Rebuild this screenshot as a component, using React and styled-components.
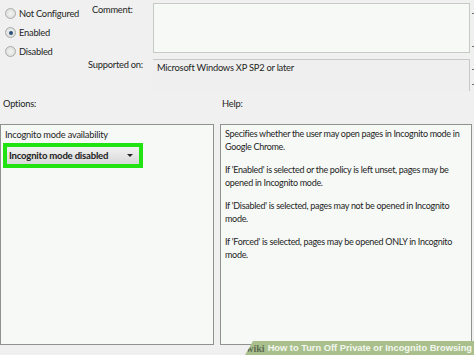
import styled, { createGlobalStyle } from 'styled-components'

const Global = createGlobalStyle`
  html, body {
    margin: 0;
    padding: 0;
    background: #eff0ef;
  }
  body {
    font-family: Lato, "Open Sans", sans-serif;
    font-size: 9.3px;
    letter-spacing: -0.22px;
    color: #1e1e1e;
  }
`;

const Page = styled.div`
  position: relative;
  width: 474px;
  height: 355px;
  overflow: hidden;
  display: flex;
  flex-direction: column;
`;

const Top = styled.div`
  display: flex;
  flex-direction: row;
  padding-top: 3px;
`;

const RadioGroup = styled.div`
  width: 88px;
  display: flex;
  flex-direction: column;
  gap: 6px;
  padding: 4px 0 0 5px;
  box-sizing: border-box;
`;

const RadioRow = styled.label`
  display: flex;
  align-items: center;
  gap: 3px;
  height: 13px;
  white-space: nowrap;
`;

const RadioCircle = styled.span`
  width: 9px;
  height: 9px;
  border-radius: 50%;
  border: 1px solid #a9aca9;
  background: radial-gradient(circle, #f4f4f4 0%, #d5d8d5 100%);
  display: flex;
  align-items: center;
  justify-content: center;
  &::after {
    content: "";
    width: 4px;
    height: 4px;
    border-radius: 50%;
    background: ${p => (p.$checked ? '#2a4f78' : 'transparent')};
  }
`;

const Fields = styled.div`
  flex: 1;
  display: grid;
  grid-template-columns: 65px 1fr 5px;
  grid-template-rows: 50px 32px;
  row-gap: 6px;
`;

const FieldLabel = styled.div`
  padding: ${p => p.$top || 0}px 0 0 4px;
  white-space: nowrap;
`;

const Box = styled.div`
  background: ${p => (p.$gray ? '#eeefee' : '#f6f9f6')};
  border: 1px solid #c6cac6;
  border-right: none;
  ${p => p.$gray && 'border-bottom: none; border-left: none;'}
  padding: 2px 4px;
  box-sizing: border-box;
`;

const ScrollStub = styled.div`
  border-left: 1px solid #c6cac6;
  display: flex;
  flex-direction: column;
  justify-content: space-between;
  padding: 10px 0 6px 2px;
  &::before, &::after {
    content: "";
    width: 3px;
    height: 1px;
    background: #6f6f6f;
  }
`;

const Headers = styled.div`
  display: flex;
  flex-direction: row;
  padding: 7px 0 0 3px;
  height: 33px;
  box-sizing: border-box;
`;

const HeaderLabel = styled.div`
  width: ${p => p.$w}px;
`;

const Panels = styled.div`
  display: flex;
  flex-direction: row;
  gap: 6px;
`;

const Panel = styled.div`
  width: ${p => p.$w}px;
  height: 221px;
  box-sizing: border-box;
  background: #f6f9f6;
  border: 1px solid #8f928f;
  padding: ${p => p.$pad};
  overflow: hidden;
`;

const OptionLabel = styled.div`
  margin: 4px 0 0 4px;
`;

const Highlight = styled.div`
  margin: 3px 0 0 2px;
  width: 140px;
  height: 25px;
  box-sizing: border-box;
  border: 4px solid #21e312;
  background: #21e312;
`;

const Select = styled.div`
  height: 100%;
  display: flex;
  align-items: center;
  justify-content: space-between;
  padding: 0 6px 0 2px;
  background: linear-gradient(#f2f2f2, #d8d8d8);
  font-weight: 700;
  font-size: 9.6px;
  color: #222;
  white-space: nowrap;
  &::after {
    content: "";
    border-left: 3px solid transparent;
    border-right: 3px solid transparent;
    border-top: 3px solid #222;
  }
`;

const HelpPara = styled.p`
  margin: 0 0 10px 0;
  line-height: 13px;
  font-size: 9px;
  letter-spacing: -0.3px;
`;

const HelpLine = styled.span`
  display: block;
`;

const Banner = styled.div`
  position: absolute;
  right: 0;
  bottom: 0;
  height: 14px;
  width: 229px;
  background: #a9c08d;
  clip-path: polygon(8px 0, 100% 0, 100% 100%, 0 100%);
  display: flex;
  align-items: center;
  justify-content: flex-end;
  padding-right: 2px;
  box-sizing: border-box;
  gap: 3px;
  font-family: "Liberation Sans", Arial, sans-serif;
  font-weight: bold;
  font-size: 9.3px;
  letter-spacing: 0;
  color: #f4f7ef;
  white-space: nowrap;
`;

const Wiki = styled.span`
  color: #5e6b52;
  font-family: "Liberation Serif", serif;
  font-size: 10px;
`;

const help = [
  ['Specifies whether the user may open pages in Incognito mode in', 'Google Chrome.'],
  ["If 'Enabled' is selected or the policy is left unset, pages may be", 'opened in Incognito mode.'],
  ["If 'Disabled' is selected, pages may not be opened in Incognito", 'mode.'],
  ["If 'Forced' is selected, pages may be opened ONLY in Incognito", 'mode.'],
];

function App() {
  const radios = [
    ['Not Configured', false],
    ['Enabled', true],
    ['Disabled', false],
  ];
  return (
    <Page>
      <Global />
      <Top>
        <RadioGroup>
          {radios.map(([label, checked]) => (
            <RadioRow key={label}>
              <RadioCircle $checked={checked} />
              {label}
            </RadioRow>
          ))}
        </RadioGroup>
        <Fields>
          <FieldLabel $top={1}>Comment:</FieldLabel>
          <Box />
          <ScrollStub />
          <FieldLabel $top={-1}>Supported on:</FieldLabel>
          <Box $gray>Microsoft Windows XP SP2 or later</Box>
          <ScrollStub />
        </Fields>
      </Top>
      <Headers>
        <HeaderLabel $w={219}>Options:</HeaderLabel>
        <HeaderLabel>Help:</HeaderLabel>
      </Headers>
      <Panels>
        <Panel $w={214} $pad="0">
          <OptionLabel>Incognito mode availability</OptionLabel>
          <Highlight>
            <Select>Incognito mode disabled</Select>
          </Highlight>
        </Panel>
        <Panel $w={252} $pad="2px 1px 2px 4px">
          {help.map((lines, i) => (
            <HelpPara key={i}>
              {lines.map(l => <HelpLine key={l}>{l}</HelpLine>)}
            </HelpPara>
          ))}
        </Panel>
      </Panels>
      <Banner>
        <Wiki>wiki</Wiki>
        How to Turn Off Private or Incognito Browsing
      </Banner>
    </Page>
  );
}

export default App;
